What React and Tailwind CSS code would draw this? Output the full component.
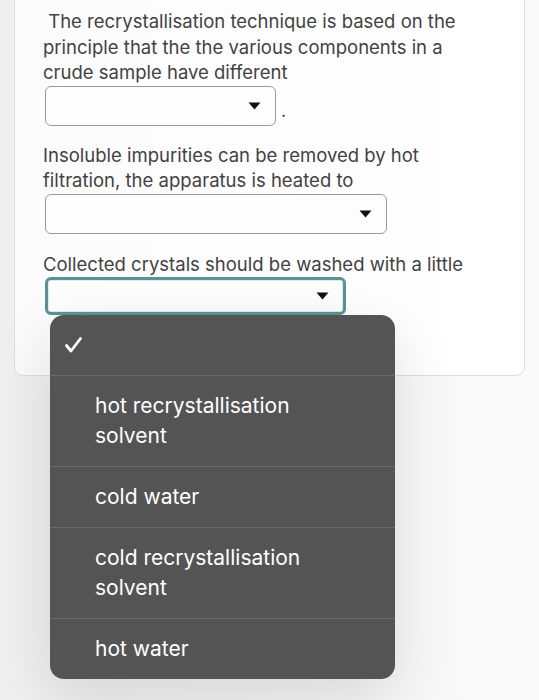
import React from "react";

function Arrow() {
  return (
    <svg width="13" height="8" viewBox="0 0 13 8" className="shrink-0">
      <path d="M0.5 0.5 H12.5 L6.5 7.5 Z" fill="#111" />
    </svg>
  );
}

function FakeSelect({ width, focused }) {
  return (
    <div
      className={
        "flex items-center justify-end rounded-[6px] bg-[#fdfdfd] " +
        (focused
          ? "h-[38px] border-[3px] border-[#5f8f98] pr-[14px] shadow-[inset_0_0_0_1px_#d6eef2]"
          : "h-[40px] border border-[#9a9a9a] pr-[14px]")
      }
      style={{ width }}
    >
      <Arrow />
    </div>
  );
}

const options = [
  ["hot recrystallisation", "solvent"],
  ["cold water"],
  ["cold recrystallisation", "solvent"],
  ["hot water"],
];

export default function App() {
  return (
    <div
      className="relative h-[700px] w-[539px] overflow-hidden bg-gradient-to-r from-[#efefef] to-[#fafafa] text-[#424242]"
      style={{ fontFamily: 'Inter, "Liberation Sans", sans-serif' }}
    >
      <div className="mx-[14px] -mt-[12px] h-[388px] rounded-[9px] border border-[#dedede] bg-gradient-to-r from-[#fbfbfb] to-white pl-[28px] pr-[10px] pt-[20px]">
        <p className="whitespace-nowrap text-[18.5px] leading-[25.5px]">
          &nbsp;The recrystallisation technique is based on the
          <br />
          principle that the the various components in a
          <br />
          crude sample have different
        </p>
        <div className="flex items-end pl-[2px]">
          <FakeSelect width={231} />
          <span className="mb-[6px] ml-[5px] text-[18px] leading-none">.</span>
        </div>

        <p className="mt-[17px] whitespace-nowrap text-[18.5px] leading-[25.5px]">
          Insoluble impurities can be removed by hot
          <br />
          filtration, the apparatus is heated to
        </p>
        <div className="pl-[2px]">
          <FakeSelect width={342} />
        </div>

        <p className="mt-[18px] whitespace-nowrap text-[18.5px] leading-[25.5px]">
          Collected crystals should be washed with a little
        </p>
        <div className="pl-[2px]">
          <FakeSelect width={301} focused />
        </div>
      </div>

      <div className="absolute left-[50px] top-[315px] w-[345px] overflow-hidden rounded-[14px] bg-[#545454] text-white shadow-[0_20px_60px_rgba(0,0,0,0.12)]">
        <div className="flex h-[60px] items-center pl-[15px]">
          <svg width="17" height="16" viewBox="0 0 17 16">
            <path
              d="M1.5 8.5 L6 14 L15.5 1.5"
              fill="none"
              stroke="white"
              strokeWidth="2.8"
              strokeLinecap="round"
              strokeLinejoin="round"
            />
          </svg>
        </div>
        {options.map((lines, i) => (
          <div
            key={i}
            className="border-t border-[#6b6b6b] py-[15px] pl-[45px] text-[21px] leading-[30px]"
          >
            {lines.map((l) => (
              <div key={l}>{l}</div>
            ))}
          </div>
        ))}
      </div>
    </div>
  );
}
